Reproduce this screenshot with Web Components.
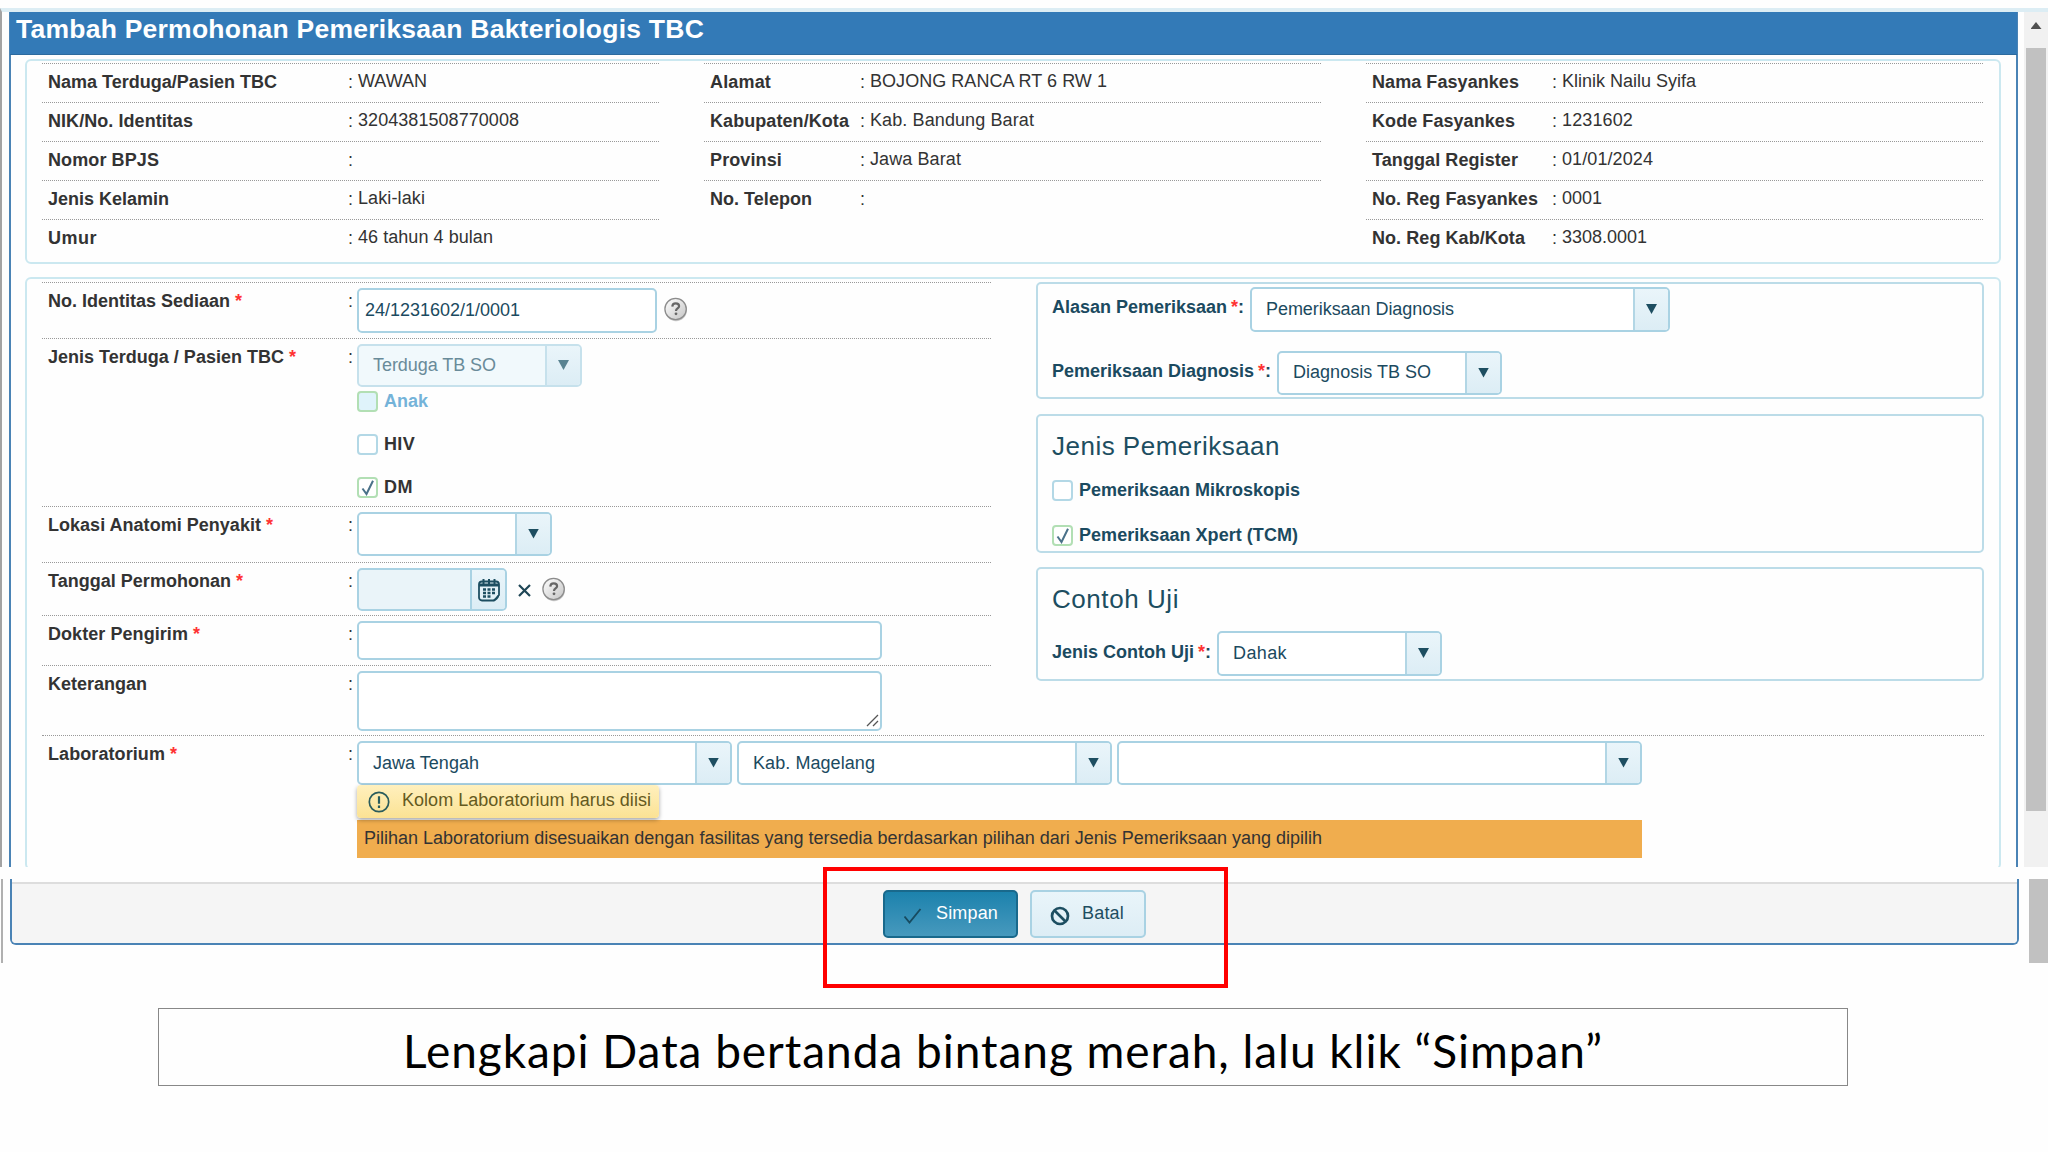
<!DOCTYPE html>
<html lang="id">
<head>
<meta charset="utf-8">
<title>Tambah Permohonan Pemeriksaan Bakteriologis TBC</title>
<style>
  body {
    margin: 0;
    width: 2048px;
    height: 1152px;
    overflow: hidden;
    background: #fefefe;
    font-family: "Liberation Sans", Arial, sans-serif;
    font-size: 18px;
    color: #333;
  }
  .patient { display: flex; gap: 45px; }
  .form { display: grid; grid-template-columns: 949px 1fr; column-gap: 45px; height: 453px; }
  .side { display: flex; flex-direction: column; }
  .line { display: flex; align-items: center; }
  .checks { display: flex; flex-direction: column; gap: 22px; padding-top: 4px; }
</style>
</head>
<body>
<request-page>
  <title-bar slot="title"><fit-text w="688">Tambah Permohonan Pemeriksaan Bakteriologis TBC</fit-text></title-bar>

  <panel-card style="height:205px; margin-top:4px; --top:2px">
    <div class="patient">
      <data-list style="--label:301px">
        <data-row label="Nama Terduga/Pasien TBC" lw="229" value="WAWAN" vw="69"></data-row>
        <data-row label="NIK/No. Identitas" lw="145" value="3204381508770008" vw="161"></data-row>
        <data-row label="Nomor BPJS" lw="111"></data-row>
        <data-row label="Jenis Kelamin" lw="121" value="Laki-laki" vw="67"></data-row>
        <data-row label="Umur" lw="49" value="46 tahun 4 bulan" vw="135"></data-row>
      </data-list>
      <data-list style="--label:151px">
        <data-row label="Alamat" lw="61" value="BOJONG RANCA RT 6 RW 1" vw="237"></data-row>
        <data-row label="Kabupaten/Kota" lw="139" value="Kab. Bandung Barat" vw="164"></data-row>
        <data-row label="Provinsi" lw="72" value="Jawa Barat" vw="91"></data-row>
        <data-row label="No. Telepon" lw="102"></data-row>
      </data-list>
      <data-list style="--label:181px">
        <data-row label="Nama Fasyankes" lw="147" value="Klinik Nailu Syifa" vw="134"></data-row>
        <data-row label="Kode Fasyankes" lw="143" value="1231602" vw="71"></data-row>
        <data-row label="Tanggal Register" lw="146" value="01/01/2024" vw="91"></data-row>
        <data-row label="No. Reg Fasyankes" lw="166" value="0001" vw="40"></data-row>
        <data-row label="No. Reg Kab/Kota" lw="153" value="3308.0001" vw="85"></data-row>
      </data-list>
    </div>
  </panel-card>

  <panel-card style="height:593px; margin-top:13px; --top:3px">
    <div class="form">
      <div>
        <form-row label="No. Identitas Sediaan" lw="182" required style="height:56px">
          <text-field style="width:300px; height:45px"><fit-text w="155">24/1231602/1/0001</fit-text></text-field>
          <app-icon name="help" style="margin:8px 0 0 6px"></app-icon>
        </form-row>
        <form-row label="Jenis Terduga / Pasien TBC" lw="236" required style="height:168px">
          <div>
            <select-box disabled style="width:225px; height:43px"><fit-text w="123">Terduga TB SO</fit-text></select-box>
            <div class="checks">
              <check-box disabled><fit-text w="44">Anak</fit-text></check-box>
              <check-box><fit-text w="31">HIV</fit-text></check-box>
              <check-box checked><fit-text w="29">DM</fit-text></check-box>
            </div>
          </div>
        </form-row>
        <form-row label="Lokasi Anatomi Penyakit" lw="213" required style="height:56px">
          <select-box style="width:195px"></select-box>
        </form-row>
        <form-row label="Tanggal Permohonan" lw="183" required style="height:53px">
          <date-field></date-field>
          <app-icon name="close" style="margin:15px 0 0 10px"></app-icon>
          <app-icon name="help" style="margin:8px 0 0 9px"></app-icon>
        </form-row>
        <form-row label="Dokter Pengirim" lw="140" required style="height:50px">
          <text-field style="width:525px; height:39px"></text-field>
        </form-row>
        <form-row label="Keterangan" lw="99" style="height:70px">
          <text-field resizable style="width:525px; height:60px"></text-field>
        </form-row>
      </div>
      <div class="side">
        <group-card style="height:117px">
          <div class="line" style="margin-top:3px">
            <inline-label label="Alasan Pemeriksaan" w="175" style="margin-top:-4px"></inline-label>
            <select-box style="width:420px; height:45px"><fit-text w="188">Pemeriksaan Diagnosis</fit-text></select-box>
          </div>
          <div class="line" style="margin-top:19px">
            <inline-label label="Pemeriksaan Diagnosis" w="202"></inline-label>
            <select-box style="width:225px"><fit-text w="138">Diagnosis TB SO</fit-text></select-box>
          </div>
        </group-card>
        <group-card style="height:139px; margin-top:15px" heading="Jenis Pemeriksaan" hw="228">
          <check-box style="margin-top:19px"><fit-text w="221">Pemeriksaan Mikroskopis</fit-text></check-box>
          <check-box checked style="margin-top:24px"><fit-text w="219">Pemeriksaan Xpert (TCM)</fit-text></check-box>
        </group-card>
        <group-card style="height:114px; margin-top:14px" heading="Contoh Uji" hw="127">
          <div class="line" style="margin-top:17px">
            <inline-label label="Jenis Contoh Uji" w="142"></inline-label>
            <select-box style="width:225px; height:45px"><fit-text w="54">Dahak</fit-text></select-box>
          </div>
        </group-card>
      </div>
    </div>
    <form-row label="Laboratorium" lw="117" required style="height:132px">
      <div>
        <div style="display:flex">
          <select-box style="width:375px"><fit-text w="106">Jawa Tengah</fit-text></select-box>
          <select-box style="width:375px; margin-left:5px"><fit-text w="122">Kab. Magelang</fit-text></select-box>
          <select-box style="width:525px; margin-left:5px"></select-box>
        </div>
        <error-hint><fit-text w="249">Kolom Laboratorium harus diisi</fit-text></error-hint>
        <note-bar><fit-text w="958">Pilihan Laboratorium disesuaikan dengan fasilitas yang tersedia berdasarkan pilihan dari Jenis Pemeriksaan yang dipilih</fit-text></note-bar>
      </div>
    </form-row>
  </panel-card>

  <action-button slot="actions" primary icon="check" style="width:135px; --gap:13px"><fit-text w="62">Simpan</fit-text></action-button>
  <action-button slot="actions" icon="cancel" style="width:116px; --gap:12px; padding-right:2px"><fit-text w="42">Batal</fit-text></action-button>
</request-page>
<focus-frame></focus-frame>
<slide-caption><fit-text w="1200">Lengkapi Data bertanda bintang merah, lalu klik “Simpan”</fit-text></slide-caption>

<script>
  // Registers an element whose shadow root is built from render(el)
  function define(tag, render, ready) {
    customElements.define(tag, class extends HTMLElement {
      connectedCallback() {
        if (this.shadowRoot) return;
        this.attachShadow({ mode: "open" }).innerHTML = render(this);
        if (ready) ready(this);
      }
    });
  }

  const icons = {
    help: [26, 26, `<defs><linearGradient id="g" x1="0" y1="0" x2="1" y2="1"><stop offset="0" stop-color="#fff"/><stop offset="1" stop-color="#c4c4c4"/></linearGradient></defs>
      <circle cx="13" cy="14.4" r="10.8" fill="#999" opacity=".55"/>
      <circle cx="12.6" cy="13" r="10.7" fill="url(#g)" stroke="#8c8c8c" stroke-width="1.3"/>
      <path d="M9.3 10.6c.1-2 1.5-3.2 3.4-3.2 2 0 3.4 1.1 3.4 2.8 0 2.2-3.1 2.3-3.1 4.7" fill="none" stroke="#666" stroke-width="2.2"/>
      <circle cx="13" cy="17.8" r="1.4" fill="#666"/>`],
    close: [15, 15, `<path d="M2 2l11 11M13 2L2 13" stroke="#1f4656" stroke-width="2.2" fill="none"/>`],
    calendar: [22, 24, `<path d="M4 3.500h14a3 3 0 0 1 3 3V17l-5 5.500H4a3 3 0 0 1-3-3v-13a3 3 0 0 1 3-3z" fill="none" stroke="#1d4e61" stroke-width="1.800"/>
      <path d="M1 5.500h20v3H1z" fill="#1d4e61"/>
      <path d="M5.500 1v5M11 1v5M16.500 1v5" stroke="#1d4e61" stroke-width="2"/>
      <path d="M5 11.500h12.500M5 15h12.500M5 18.500h8" stroke="#1d4e61" stroke-width="2.300" stroke-dasharray="3 1.500"/>
      <path d="M20.500 17.500c-1 3-2 4-5 5" stroke="#1d4e61" stroke-width="1.800" fill="none"/>`],
    alert: [24, 24, `<circle cx="12" cy="12" r="9.7" fill="none" stroke="#2a5c5c" stroke-width="1.7"/>
      <path d="M12 6.2v7.600M12 15.500v2.400" stroke="#2a5c5c" stroke-width="2.200"/>`],
    check: [20, 18, `<path d="M1.500 9.500l5 6L17.500 2" fill="none" stroke="#174b60" stroke-width="1.900"/>`],
    cancel: [20, 20, `<circle cx="10" cy="10" r="8" fill="none" stroke="#1d4e61" stroke-width="2.700"/>
      <path d="M4.500 4.500l11 11" stroke="#1d4e61" stroke-width="2.700"/>`],
    tick: [16, 17, `<path d="M2.500 9.500l4 5.500L13 1.800" fill="none" stroke="#4a7189" stroke-width="2"/>`]
  };

  define("app-icon", el => {
    const [w, h, body] = icons[el.getAttribute("name")];
    return `
      <style>
        :host { display: block; flex: none; }
        svg { display: block; }
      </style>
      <svg width="${w}" height="${h}" viewBox="0 0 ${w} ${h}">${body}</svg>
    `;
  });

  define("title-bar", () => `
    <style>
      :host {
        display: block;
        height: 43px;
        line-height: 35px;
        padding-left: 6px;
        box-sizing: border-box;
        background: #337ab7;
        border-bottom: 1px solid #2c6a9e;
        color: #fff;
        font-size: 26.5px;
        font-weight: bold;
      }
    </style>
    <slot></slot>
  `);

  define("request-page", () => `
    <style>
      :host { display: block; }
      .view {
        display: flex;
        height: 859px;
        margin-top: 8px;
        border-top: 4px solid #dcedf4;
        border-left: 2px solid #a3a3a3;
        box-sizing: border-box;
        overflow: hidden;
      }
      .panel {
        width: 2009px;
        margin-left: 7px;
        box-sizing: border-box;
        border: 2px solid #4a83b5;
        border-top: 0;
        border-bottom: 0;
        background: #fefefe;
      }
      ::slotted([slot=title]) { margin: 0 -1px; }
      .scroll {
        width: 24px;
        margin-left: 6px;
        background: #f1f1f1;
        display: flex;
        flex-direction: column;
        align-items: center;
      }
      .arrow { width: 11px; height: 7px; margin: 10px 0 19px; background: #505050; clip-path: polygon(50% 0, 100% 100%, 0 100%); }
      .thumb { width: 20px; height: 763px; background: #c1c1c1; }
      .bottom {
        display: flex;
        height: 84px;
        margin: 12px 0 0 1px;
        border-left: 2px solid #b0b0b0;
      }
      .footer {
        width: 2009px;
        height: 66px;
        margin-left: 7px;
        box-sizing: border-box;
        border: 2px solid #4a83b5;
        border-top: 0;
        border-radius: 0 0 6px 6px;
        padding-top: 3px;
        overflow: hidden;
      }
      .actions {
        height: 61px;
        background: #f5f5f5;
        border-top: 2px solid #ddd;
        box-sizing: border-box;
        padding: 6px 0 0 871px;
        display: flex;
        gap: 12px;
      }
      .rest { width: 19px; margin-left: auto; background: #c1c1c1; }
    </style>
    <div class="view">
      <div class="panel"><slot name="title"></slot><slot></slot></div>
      <div class="scroll"><div class="arrow"></div><div class="thumb"></div></div>
    </div>
    <div class="bottom">
      <div class="footer"><div class="actions"><slot name="actions"></slot></div></div>
      <div class="rest"></div>
    </div>
  `);

  define("panel-card", () => `
    <style>
      :host {
        display: block;
        box-sizing: border-box;
        width: 1976px;
        margin-left: 14px;
        padding: var(--top) 15px 0;
        border: 2px solid #cbe8f0;
        border-radius: 6px;
      }
    </style>
    <slot></slot>
  `);

  define("data-list", () => `
    <style>
      :host { display: block; width: 617px; }
    </style>
    <slot></slot>
  `);

  define("data-row", el => `
    <style>
      :host {
        display: grid;
        grid-template-columns: var(--label) 9px auto;
        justify-content: start;
        height: 39.1px;
        box-sizing: border-box;
        padding-left: 6px;
        border-top: 1px dotted #999;
        line-height: 24px;
      }
      .label { padding-top: 6px; font-weight: bold; }
      .colon { padding-top: 6px; margin-left: -1px; }
      .value { padding-top: 5px; }
    </style>
    <div class="label"><fit-text w="${el.getAttribute("lw")}">${el.getAttribute("label")}</fit-text></div>
    <div class="colon">:</div>
    <div class="value">${el.hasAttribute("value") ? `<fit-text w="${el.getAttribute("vw")}">${el.getAttribute("value")}</fit-text>` : ""}</div>
  `);

  define("form-row", el => `
    <style>
      :host {
        display: grid;
        grid-template-columns: 300px 9px 1fr;
        box-sizing: border-box;
        padding-left: 6px;
        border-top: 1px dotted #999;
        line-height: 24px;
      }
      .label { padding-top: 6px; font-weight: bold; }
      .colon { padding-top: 6px; }
      .star { color: #f33; margin-left: 5px; }
      .content { display: flex; align-items: flex-start; padding-top: 5px; }
    </style>
    <div class="label"><fit-text w="${el.getAttribute("lw")}">${el.getAttribute("label")}</fit-text>${el.hasAttribute("required") ? `<span class="star">*</span>` : ""}</div>
    <div class="colon">:</div>
    <div class="content"><slot></slot></div>
  `);

  define("inline-label", el => `
    <style>
      :host { display: block; font-weight: bold; color: #1b4a60; white-space: nowrap; margin-top: -3px; }
      .star { color: #f33; margin: 0 0 0 4px; }
      .colon { margin-right: 6px; }
    </style>
    <fit-text w="${el.getAttribute("w")}">${el.getAttribute("label")}</fit-text><span class="star">*</span><span class="colon">:</span>
  `);

  define("text-field", el => `
    <style>
      :host {
        display: flex;
        align-items: center;
        box-sizing: border-box;
        padding: 0 0 1px 6px;
        background: #fff;
        border: 2px solid #a9d2e3;
        border-radius: 5px;
        color: #1b4a60;
      }
      svg { align-self: flex-end; margin: 0 1px 1px auto; }
    </style>
    <slot></slot>
    ${el.hasAttribute("resizable") ? `<svg width="13" height="13" viewBox="0 0 13 13"><path d="M1 12L12 1M7 12l5-5" stroke="#555" stroke-width="1.3"/></svg>` : ""}
  `);

  define("select-box", () => `
    <style>
      :host {
        display: flex;
        flex: none;
        height: 44px;
        box-sizing: border-box;
        background: #fff;
        border: 2px solid #a9d2e3;
        border-radius: 5px;
        overflow: hidden;
        color: #1b4a60;
      }
      :host([disabled]) { background: #f1f9fc; border-color: #c6e1ec; color: #698b99; }
      .value { flex: 1; display: flex; align-items: center; padding: 0 0 1px 14px; }
      .trigger {
        width: 33px;
        border-left: 2px solid #b2d6e5;
        background: linear-gradient(#eaf5fa, #dcedf5);
        display: flex;
        align-items: center;
        justify-content: center;
      }
      :host([disabled]) .trigger { border-color: #c6e1ec; }
      .arrow { width: 11px; height: 10px; margin-bottom: 1px; background: #1d4e61; clip-path: polygon(0 0, 100% 0, 50% 100%); }
      :host([disabled]) .arrow { background: #598391; }
    </style>
    <div class="value"><slot></slot></div>
    <div class="trigger"><div class="arrow"></div></div>
  `);

  define("date-field", () => `
    <style>
      :host {
        display: flex;
        width: 150px;
        height: 43px;
        box-sizing: border-box;
        background: #eaf4f9;
        border: 2px solid #a9d2e3;
        border-radius: 5px;
        overflow: hidden;
      }
      .button {
        width: 33px;
        margin-left: auto;
        border-left: 2px solid #a9d2e3;
        background: linear-gradient(#eaf5fa, #dcedf5);
        display: flex;
        align-items: center;
        justify-content: center;
      }
    </style>
    <div class="button"><app-icon name="calendar"></app-icon></div>
  `);

  define("check-box", el => `
    <style>
      :host { display: flex; align-items: center; height: 21px; font-weight: bold; line-height: 21px; color: var(--check-color, #333); }
      .box {
        width: 21px;
        height: 21px;
        box-sizing: border-box;
        border: 2px solid #b3d8e6;
        border-radius: 4px;
        margin-right: 6px;
        background: #fff;
        display: flex;
        align-items: center;
        justify-content: center;
      }
      :host([checked]) .box, :host([disabled]) .box { border-color: #b2dfb4; }
      :host([disabled]) { color: #74b3d9; }
      :host([disabled]) .box { background: #dff3fb; }
    </style>
    <div class="box">${el.hasAttribute("checked") ? `<app-icon name="tick"></app-icon>` : ""}</div>
    <slot></slot>
  `);

  define("group-card", el => `
    <style>
      :host {
        display: block;
        box-sizing: border-box;
        width: 948px;
        border: 2px solid #bcdce8;
        border-radius: 5px;
        padding-left: 14px;
        --check-color: #1b4a60;
      }
      .heading { font-size: 26px; line-height: 30px; padding-top: 15px; color: #1d4e61; }
    </style>
    ${el.hasAttribute("heading") ? `<div class="heading"><fit-text w="${el.getAttribute("hw")}">${el.getAttribute("heading")}</fit-text></div>` : ""}
    <slot></slot>
  `);

  define("error-hint", () => `
    <style>
      :host {
        display: flex;
        align-items: center;
        width: 302px;
        height: 33px;
        box-sizing: border-box;
        padding: 0 0 0 10px;
        background: linear-gradient(#fff0bd, #fbe294);
        border-radius: 4px;
        box-shadow: 0 2px 4px rgba(0,0,0,.35);
        color: #655a1e;
        position: relative;
      }
      app-icon { margin-right: 11px; }
      slot { display: block; margin-top: -3px; }
    </style>
    <app-icon name="alert"></app-icon><slot></slot>
  `);

  define("note-bar", () => `
    <style>
      :host {
        display: block;
        height: 38px;
        line-height: 36px;
        margin-top: 2px;
        padding-left: 7px;
        background: #f0ad4e;
      }
    </style>
    <slot></slot>
  `);

  define("action-button", el => `
    <style>
      :host {
        display: flex;
        align-items: center;
        justify-content: center;
        gap: var(--gap);
        height: 48px;
        box-sizing: border-box;
        border: 2px solid #a9d2e3;
        border-radius: 5px;
        background: linear-gradient(#e9f5fa, #ddedf5);
        color: #1d4e61;
      }
      :host([primary]) {
        border-color: #19698c;
        background: linear-gradient(#1c82ad, #4799bd);
        color: #fff;
      }
      app-icon { margin-top: 3px; }
      slot { display: block; margin-top: -1px; }
    </style>
    <app-icon name="${el.getAttribute("icon")}"></app-icon><slot></slot>
  `);

  define("focus-frame", () => `
    <style>
      :host {
        display: block;
        position: absolute;
        left: 823px;
        top: 867px;
        width: 405px;
        height: 121px;
        box-sizing: border-box;
        border: 4px solid #f00;
      }
    </style>
  `);

  define("slide-caption", () => `
    <style>
      :host {
        display: block;
        width: 1690px;
        height: 78px;
        margin: 45px 0 0 158px;
        box-sizing: border-box;
        border: 1px solid #888;
        text-align: center;
        font-family: Lato, "Liberation Sans", sans-serif;
        font-size: 46px;
        line-height: 84px;
        color: #000;
      }
    </style>
    <slot></slot>
  `);

  // Single line of text tracked to a given width. Defined last: it measures
  // itself, so the fonts set by the elements around it must already apply.
  define("fit-text", () => `
    <style>
      :host { display: inline-block; white-space: nowrap; }
    </style>
    <slot></slot>
  `, el => {
    const w = parseFloat(el.getAttribute("w"));
    const natural = el.getBoundingClientRect().width;
    el.style.letterSpacing = ((w - natural) / [...el.textContent].length).toFixed(3) + "px";
  });
</script>
</body>
</html>
